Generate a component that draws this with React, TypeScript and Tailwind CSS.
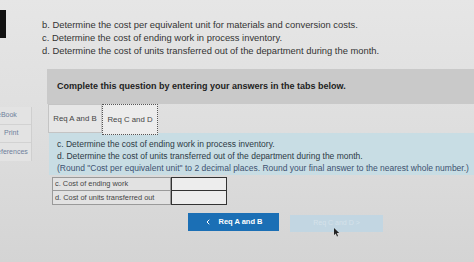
import { ChevronLeft } from 'lucide-react';

export default function App() {
  return (
    <div
      className="relative w-[474px] h-[262px] overflow-hidden flex bg-gradient-to-b from-[#e6e6e6] via-[#dedede] to-[#d4d4d4] text-[#2f2f2f]"
      style={{ fontFamily: '"Liberation Sans", Arial, sans-serif' }}
    >
      {/* left edge + sidebar */}
      <div className="w-[42px] shrink-0 flex flex-col">
        <div className="mt-[10px] w-[6px] h-[28px] bg-[#111]" />
        <div className="mt-[69px] w-[32px] flex flex-col bg-[#e3e3e3] border-r border-[#cfcfcf] text-[7px] text-[#6f7f9c] overflow-hidden">
          <div className="h-[18px] flex items-center -ml-[3px] border-b border-[#d2d2d2]">eBook</div>
          <div className="h-[18px] flex items-center pl-[4px] border-b border-[#d2d2d2]">Print</div>
          <div className="h-[18px] flex items-center -ml-[8px]">References</div>
        </div>
      </div>

      {/* main */}
      <div className="flex-1 flex flex-col">
        <div className="pt-[18px] text-[9.4px] leading-[13px] text-[#333]">
          <p>b. Determine the cost per equivalent unit for materials and conversion costs.</p>
          <p>c. Determine the cost of ending work in process inventory.</p>
          <p>d. Determine the cost of units transferred out of the department during the month.</p>
        </div>

        <div className="mt-[12px] ml-[5px] h-[35px] bg-[#c9c9c9] flex items-center pl-[10px]">
          <p className="text-[9px] font-bold text-[#222]">Complete this question by entering your answers in the tabs below.</p>
        </div>

        <div className="ml-[6px] flex items-start h-[29px]">
          <div className="w-[54px] h-[29px] bg-[#e6e6e6] border border-[#c4c4c4] flex items-center justify-center text-[7.8px] text-[#444]">
            Req A and B
          </div>
          <div className="w-[56px] h-[31px] bg-[#ececec] border border-dotted border-[#555] flex items-center justify-center text-[7.8px] text-[#444] relative z-10">
            Req C and D
          </div>
        </div>

        <div className="ml-[7px] h-[42px] bg-[#c8dde4] pl-[8px] pt-[5px] text-[8.5px] leading-[12px] text-[#2c3a44] whitespace-nowrap">
          <p>c. Determine the cost of ending work in process inventory.</p>
          <p>d. Determine the cost of units transferred out of the department during the month.</p>
          <p className="text-[#3d5270]">(Round "Cost per equivalent unit" to 2 decimal places. Round your final answer to the nearest whole number.)</p>
        </div>

        <div className="mt-[2px] ml-[10px] w-[175px] flex flex-col text-[7.4px] text-[#444]">
          <div className="flex h-[14px]">
            <div className="w-[119px] bg-[#e2e2e2] border border-[#9a9a9a] flex items-center pl-[2px]">c. Cost of ending work</div>
            <div className="flex-1 bg-[#ededed] border border-[#333]" />
          </div>
          <div className="flex h-[14px]">
            <div className="w-[119px] bg-[#e2e2e2] border border-t-0 border-[#9a9a9a] flex items-center pl-[2px]">d. Cost of units transferred out</div>
            <div className="flex-1 bg-[#ededed] border border-t-0 border-[#333]" />
          </div>
        </div>

        <div className="mt-[8px] ml-[146px] flex items-start gap-[11px]">
          <div className="w-[91px] h-[18px] bg-[#1b6fb5] flex items-center justify-center gap-[6px] text-white text-[7.5px] font-bold">
            <ChevronLeft className="w-[8px] h-[8px]" strokeWidth={3} />
            <span>Req A and B</span>
          </div>
          <div className="mt-[2px] w-[93px] h-[17px] bg-[#c2d6e2] flex items-center justify-center text-[#d5e2ea] text-[7px]">
            Req C and D &gt;
          </div>
        </div>
      </div>

      {/* mouse pointer */}
      <svg className="absolute left-[334px] top-[228px]" width="6" height="9" viewBox="0 0 6 9">
        <path d="M0 0 L0 7 L1.8 5.4 L3 8.4 L4 8 L2.8 5.1 L5.2 5 Z" fill="#222" />
      </svg>
    </div>
  );
}
